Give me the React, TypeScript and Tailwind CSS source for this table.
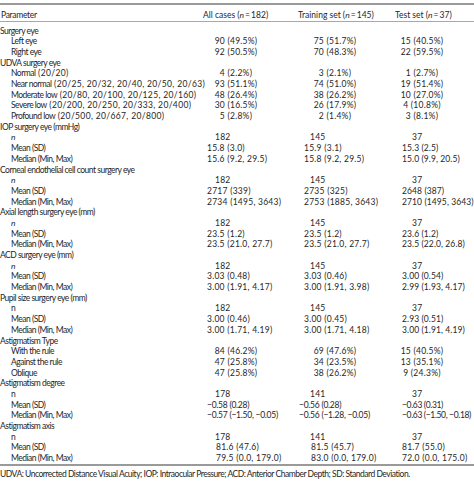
import React from 'react';

type Kind = 'head' | 'cat' | 'n' | 'stat' | 'neg' | 'axis';

interface Row {
  label: React.ReactNode;
  paren?: string; // numeric part of the label, set wider like the figures
  kind: Kind;
  v?: [string, string, string];
}

const N = <span className="italic">n</span>;

const rows: Row[] = [
  { label: 'Surgery eye', kind: 'head' },
  { label: 'Left eye', kind: 'cat', v: ['90 (49.5%)', '75 (51.7%)', '15 (40.5%)'] },
  { label: 'Right eye', kind: 'cat', v: ['92 (50.5%)', '70 (48.3%)', '22 (59.5%)'] },
  { label: 'UDVA surgery eye', kind: 'head' },
  { label: 'Normal', paren: '(20/20)', kind: 'cat', v: ['4 (2.2%)', '3 (2.1%)', '1 (2.7%)'] },
  { label: 'Near normal', paren: '(20/25, 20/32, 20/40, 20/50, 20/63)', kind: 'cat', v: ['93 (51.1%)', '74 (51.0%)', '19 (51.4%)'] },
  { label: 'Moderate low', paren: '(20/80, 20/100, 20/125, 20/160)', kind: 'cat', v: ['48 (26.4%)', '38 (26.2%)', '10 (27.0%)'] },
  { label: 'Severe low', paren: '(20/200, 20/250, 20/333, 20/400)', kind: 'cat', v: ['30 (16.5%)', '26 (17.9%)', '4 (10.8%)'] },
  { label: 'Profound low', paren: '(20/500, 20/667, 20/800)', kind: 'cat', v: ['5 (2.8%)', '2 (1.4%)', '3 (8.1%)'] },
  { label: 'IOP surgery eye (mmHg)', kind: 'head' },
  { label: N, kind: 'n', v: ['182', '145', '37'] },
  { label: 'Mean (SD)', kind: 'stat', v: ['15.8 (3.0)', '15.9 (3.1)', '15.3 (2.5)'] },
  { label: 'Median (Min, Max)', kind: 'stat', v: ['15.6 (9.2, 29.5)', '15.8 (9.2, 29.5)', '15.0 (9.9, 20.5)'] },
  { label: 'Corneal endothelial cell count surgery eye', kind: 'head' },
  { label: N, kind: 'n', v: ['182', '145', '37'] },
  { label: 'Mean (SD)', kind: 'stat', v: ['2717 (339)', '2735 (325)', '2648 (387)'] },
  { label: 'Median (Min, Max)', kind: 'stat', v: ['2734 (1495, 3643)', '2753 (1885, 3643)', '2710 (1495, 3643)'] },
  { label: 'Axial length surgery eye (mm)', kind: 'head' },
  { label: N, kind: 'n', v: ['182', '145', '37'] },
  { label: 'Mean (SD)', kind: 'stat', v: ['23.5 (1.2)', '23.5 (1.2)', '23.6 (1.2)'] },
  { label: 'Median (Min, Max)', kind: 'stat', v: ['23.5 (21.0, 27.7)', '23.5 (21.0, 27.7)', '23.5 (22.0, 26.8)'] },
  { label: 'ACD surgery eye (mm)', kind: 'head' },
  { label: N, kind: 'n', v: ['182', '145', '37'] },
  { label: 'Mean (SD)', kind: 'stat', v: ['3.03 (0.48)', '3.03 (0.46)', '3.00 (0.54)'] },
  { label: 'Median (Min, Max)', kind: 'stat', v: ['3.00 (1.91, 4.17)', '3.00 (1.91, 3.98)', '2.99 (1.93, 4.17)'] },
  { label: 'Pupil size surgery eye (mm)', kind: 'head' },
  { label: 'n', kind: 'n', v: ['182', '145', '37'] },
  { label: 'Mean (SD)', kind: 'stat', v: ['3.00 (0.46)', '3.00 (0.45)', '2.93 (0.51)'] },
  { label: 'Median (Min, Max)', kind: 'stat', v: ['3.00 (1.71, 4.19)', '3.00 (1.71, 4.18)', '3.00 (1.91, 4.19)'] },
  { label: 'Astigmatism Type', kind: 'head' },
  { label: 'With the rule', kind: 'cat', v: ['84 (46.2%)', '69 (47.6%)', '15 (40.5%)'] },
  { label: 'Against the rule', kind: 'cat', v: ['47 (25.8%)', '34 (23.5%)', '13 (35.1%)'] },
  { label: 'Oblique', kind: 'cat', v: ['47 (25.8%)', '38 (26.2%)', '9 (24.3%)'] },
  { label: 'Astigmatism degree', kind: 'head' },
  { label: 'n', kind: 'n', v: ['178', '141', '37'] },
  { label: 'Mean (SD)', kind: 'neg', v: ['\u22120.58 (0.28)', '\u22120.56 (0.28)', '\u22120.63 (0.31)'] },
  { label: 'Median (Min, Max)', kind: 'neg', v: ['\u22120.57 (\u22121.50, \u22120.05)', '\u22120.56 (\u22121.28, \u22120.05)', '\u22120.63 (\u22121.50, \u22120.18)'] },
  { label: 'Astigmatism axis', kind: 'head' },
  { label: 'n', kind: 'n', v: ['178', '141', '37'] },
  { label: 'Mean (SD)', kind: 'axis', v: ['81.6 (47.6)', '81.5 (45.7)', '81.7 (55.0)'] },
  { label: 'Median (Min, Max)', kind: 'axis', v: ['79.5 (0.0, 179.0)', '83.0 (0.0, 179.0)', '72.0 (0.0, 175.0)'] },
];

// per-column cell classes for each row kind (columns start at 203 / 299 / 399)
const cellClass: Record<Exclude<Kind, 'head'>, [string, string, string]> = {
  cat: ['w-[66px] text-center tracking-[0.25px]', 'w-[72px] text-center tracking-[0.25px]', 'w-[46px] text-center tracking-[0.25px]'],
  n: ['pl-[12px] tracking-[0.25px]', 'pl-[11px] tracking-[0.25px]', 'pl-[13px] tracking-[0.25px]'],
  stat: ['pl-[4px] tracking-[0.25px]', 'pl-[5px] tracking-[0.25px]', 'pl-[3px] tracking-[0.1px]'],
  neg: ['pl-[4px] tracking-[-0.25px]', 'pl-0 tracking-[-0.25px]', 'pl-[3px] tracking-[-0.35px]'],
  axis: ['pl-[13px] tracking-[0.25px]', 'pl-[12px] tracking-[0.25px]', 'pl-[3px] tracking-[0.25px]'],
};

export default function App() {
  return (
    <div
      className="w-[474px] h-[486px] bg-white text-[#262626] text-[8.5px] leading-[10.7px] overflow-hidden pt-[3px] whitespace-nowrap"
      style={{ fontFamily: 'Lato, "Open Sans", sans-serif' }}
    >
      <div className="h-[1.5px] bg-[#9a9a9a]" />

      {/* header */}
      <div className="grid grid-cols-[203px_96px_100px_75px] pt-[5px] pb-[1px]">
        <div className="pl-[1px] tracking-[-0.3px]">Parameter</div>
        <div>All cases ({N}{'\u2009=\u2009'}182)</div>
        <div className="-ml-[1px]">Training set ({N}{'\u2009=\u2009'}145)</div>
        <div className="-ml-[4px]">Test set ({N}{'\u2009=\u2009'}37)</div>
      </div>
      <div className="h-px bg-[#a8a8a8]" />

      {/* body */}
      <div className="pt-[3.4px]">
        {rows.map((r, i) =>
          r.kind === 'head' ? (
            <div key={i} className="h-[10.7px] tracking-[-0.5px]">{r.label}</div>
          ) : (
            <div key={i} className="grid grid-cols-[203px_96px_100px_75px] h-[10.7px]">
              <div className="pl-[11px]">
                <span className="tracking-[-0.5px]">{r.label}</span>
                {r.paren && <span className="tracking-[0.35px]"> {r.paren}</span>}
              </div>
              {r.v!.map((val, j) => (
                <div key={j} className={cellClass[r.kind as Exclude<Kind, 'head'>][j]}>
                  {val}
                </div>
              ))}
            </div>
          )
        )}
      </div>

      <div className="h-[1.5px] bg-[#9a9a9a] mt-[0.5px]" />
      <div className="pt-[3.5px] tracking-[-0.48px]">
        UDVA: Uncorrected Distance Visual Acuity; IOP: Intraocular Pressure; ACD: Anterior Chamber Depth; SD: Standard Deviation.
      </div>
    </div>
  );
}
